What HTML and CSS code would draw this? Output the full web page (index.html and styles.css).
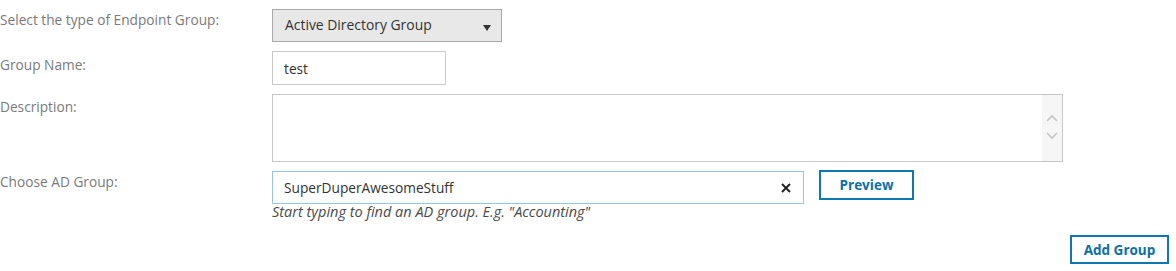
FILE: index.html
```html
<!DOCTYPE html>
<html>
<head>
<meta charset="utf-8">
<link rel="stylesheet" href="styles.css">
</head>
<body>
<form class="form">
  <div class="row row-type">
    <label class="label">Select the type of Endpoint Group:</label>
    <div class="field">
      <div class="select">
        <span class="select-text">Active Directory Group</span>
        <svg class="caret" width="8" height="6" viewBox="0 0 8 6"><path d="M0 0H8L4 6Z" fill="#333"/></svg>
      </div>
    </div>
  </div>
  <div class="row row-name">
    <label class="label">Group Name:</label>
    <div class="field">
      <div class="input input-name">test</div>
    </div>
  </div>
  <div class="row row-desc">
    <label class="label">Description:</label>
    <div class="field">
      <div class="textarea">
        <div class="scrollbar">
          <svg width="12" height="8" viewBox="0 0 12 8"><path d="M1 7L6 2L11 7" fill="none" stroke="#c4c4c4" stroke-width="1.6"/></svg>
          <svg width="12" height="8" viewBox="0 0 12 8"><path d="M1 1L6 6L11 1" fill="none" stroke="#c4c4c4" stroke-width="1.6"/></svg>
        </div>
      </div>
    </div>
  </div>
  <div class="row row-ad">
    <label class="label">Choose AD Group:</label>
    <div class="field">
      <div class="ad-line">
        <div class="input input-ad">
          <span>SuperDuperAwesomeStuff</span>
          <svg class="clear" width="10" height="10" viewBox="0 0 10 10"><path d="M1 1L9 9M9 1L1 9" stroke="#222" stroke-width="2"/></svg>
        </div>
        <button type="button" class="btn btn-preview">Preview</button>
      </div>
      <div class="hint">Start typing to find an AD group. E.g. "Accounting"</div>
    </div>
  </div>
  <div class="actions">
    <button type="button" class="btn btn-add">Add Group</button>
  </div>
</form>
</body>
</html>
```
FILE: styles.css
```css
html, body {
  margin: 0;
  padding: 0;
  background: #fff;
}
body {
  font-family: "Open Sans", Lato, "Liberation Sans", sans-serif;
  font-size: 13px;
  color: #333;
}
.form {
  width: 1176px;
  padding-top: 9px;
}
.row {
  display: grid;
  grid-template-columns: 272px 1fr;
  margin-bottom: 9px;
}
.label {
  color: #7a7a7a;
  font-size: 13.7px;
  padding-top: 3px;
  line-height: 16px;
}
.row-name .label { padding-top: 6px; }
.row-desc .label { padding-top: 5px; }
.row-ad .label { padding-top: 3px; }
.row-ad { margin-top: 2px; }
.select {
  width: 230px;
  height: 33px;
  box-sizing: border-box;
  border: 1px solid #a9a9a9;
  background: #e8e8e8;
  display: flex;
  align-items: center;
  padding: 0 8px 0 12px;
}
.select-text {
  flex: 1;
  color: #333;
  font-size: 13.9px;
  padding-bottom: 2px;
}
.caret {
  margin-top: 5px;
  margin-right: 2px;
}
.input {
  box-sizing: border-box;
  height: 34px;
  border: 1px solid #c8c8c8;
  background: #fff;
  display: flex;
  align-items: center;
  padding: 0 11px;
  font-size: 13.7px;
  color: #333;
}
.input-name {
  width: 174px;
}
.textarea {
  box-sizing: border-box;
  width: 791px;
  height: 68px;
  border: 1px solid #c8c8c8;
  display: flex;
  justify-content: flex-end;
}
.scrollbar {
  width: 20px;
  background: #f6f6f6;
  display: flex;
  flex-direction: column;
  align-items: center;
  justify-content: center;
  gap: 10px;
  padding-bottom: 2px;
}
.ad-line {
  display: flex;
  align-items: flex-start;
  gap: 15px;
}
.input-ad {
  width: 532px;
  height: 33px;
  border-color: #9cc3e2;
  justify-content: space-between;
  padding-right: 11px;
}
.clear {
  margin-right: 1px;
}
.btn {
  box-sizing: border-box;
  background: #fff;
  border: 2px solid #0f78ad;
  color: #0d6fa3;
  font-family: "Open Sans", Lato, "Liberation Sans", sans-serif;
  font-weight: 700;
  font-size: 13.5px;
  padding: 0;
  margin: 0;
  cursor: pointer;
}
.btn-preview {
  width: 95px;
  height: 30px;
  margin-top: -1px;
}
.hint {
  font-style: italic;
  color: #4a4a4a;
  font-size: 14.5px;
  margin-top: 0;
  line-height: 16px;
}
.actions {
  display: flex;
  justify-content: flex-end;
  padding-right: 7px;
  margin-top: 15px;
}
.btn-add {
  width: 99px;
  height: 29px;
}
```
